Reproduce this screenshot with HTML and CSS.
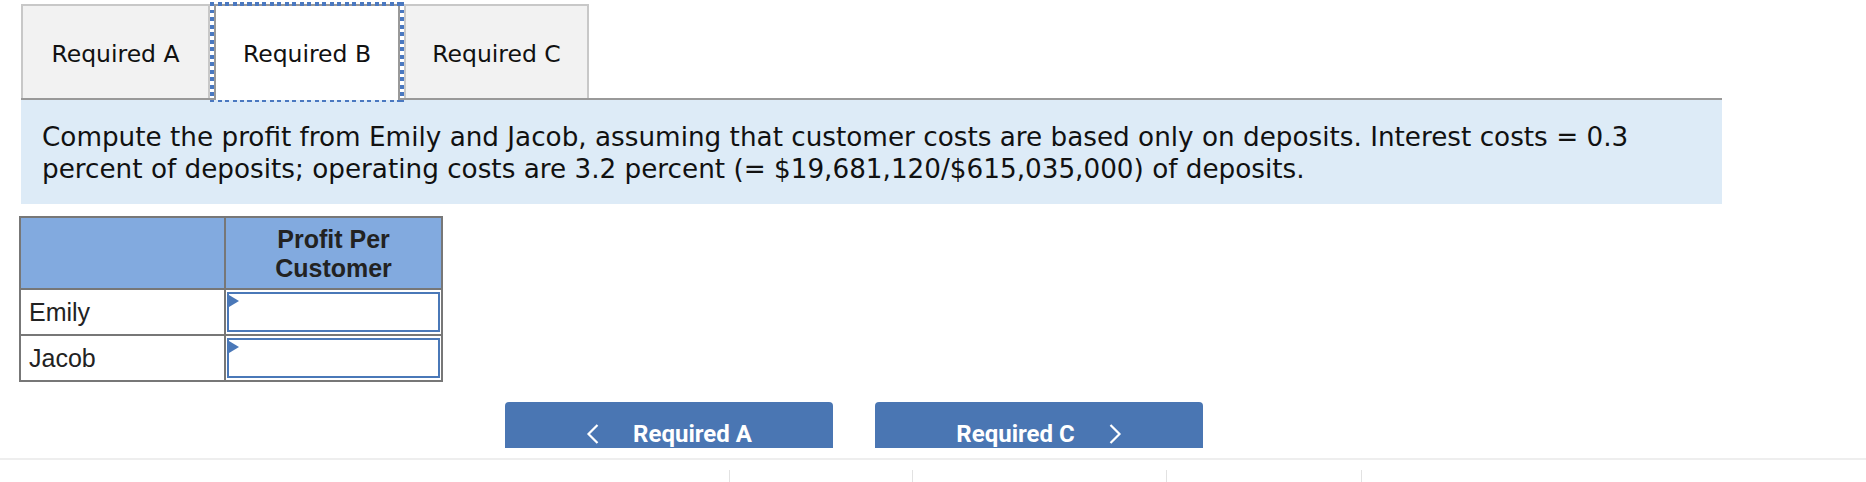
FILE: index.html
```html
<!DOCTYPE html>
<html lang="en">
<head>
    <meta charset="UTF-8">
    <meta name="viewport" content="width=device-width, initial-scale=1.0">
    <title>Required B</title>
    <link rel="stylesheet" href="styles.css">
</head>
<body>
    <div class="assignment">
        <div class="tabs">
            <button class="tab tab-a">Required A</button>
            <button class="tab tab-b active">Required B</button>
            <button class="tab tab-c">Required C</button>
        </div>

        <div class="prompt">
            Compute the profit from Emily and Jacob, assuming that customer costs are based only on deposits. Interest costs = 0.3 percent of deposits; operating costs are 3.2 percent (= $19,681,120/$615,035,000) of deposits.
        </div>

        <table class="answer">
            <tr>
                <th class="col-name"></th>
                <th class="col-value">Profit Per<br>Customer</th>
            </tr>
            <tr>
                <td class="label">Emily</td>
                <td class="entry"><span class="field"></span></td>
            </tr>
            <tr>
                <td class="label">Jacob</td>
                <td class="entry"><span class="field"></span></td>
            </tr>
        </table>

        <div class="nav">
            <button class="nav-btn">
                <svg class="chev" width="13" height="20" viewBox="0 0 13 20"><polyline points="11.5,1 2.5,10 11.5,19" fill="none" stroke="#fff" stroke-width="2.2"/></svg>
                <span>Required A</span>
            </button>
            <button class="nav-btn">
                <span>Required C</span>
                <svg class="chev" width="13" height="20" viewBox="0 0 13 20"><polyline points="1.5,1 10.5,10 1.5,19" fill="none" stroke="#fff" stroke-width="2.2"/></svg>
            </button>
        </div>
    </div>

    <div class="footer">
        <span class="cell cell-1"></span>
        <span class="cell cell-2"></span>
        <span class="cell cell-3"></span>
        <span class="cell cell-4"></span>
    </div>
</body>
</html>
```

FILE: styles.css
```css
body {
    margin: 0;
    background: #fff;
    color: #111;
    font-family: "DejaVu Sans", Verdana, sans-serif;
}

.assignment {
    margin-left: 21px;
    width: 1701px;
}

/* tabs */
.tabs {
    display: flex;
    padding-top: 4px;
    border-bottom: 2px solid #999;
}
.tab {
    height: 94px;
    padding: 4px 0 0;
    font-family: "DejaVu Sans", Verdana, sans-serif;
    font-size: 23.5px;
    color: #111;
    background: #f2f2f2;
    border: 2px solid #c8c8c8;
    border-bottom: none;
    cursor: pointer;
}
.tab-a { width: 189px; }
.tab-b { width: 186px; margin-left: 4px; }
.tab-c { width: 185px; margin-left: 4px; }
.tab.active {
    position: relative;
    height: 96px;
    padding-bottom: 2px;
    margin-bottom: -2px;
    background: #fff;
    border-color: #999;
}
.tab.active::after {
    content: "";
    position: absolute;
    top: -4px;
    bottom: -2px;
    left: -6px;
    right: -6px;
    border: 4px solid transparent;
    border-bottom-width: 2px;
    background:
        repeating-linear-gradient(90deg, #4a78c0 0 4px, transparent 4px 7.5px) top / 100% 4px no-repeat border-box,
        repeating-linear-gradient(90deg, #4a78c0 0 4px, transparent 4px 7.5px) bottom / 100% 2px no-repeat border-box,
        repeating-linear-gradient(180deg, #4a78c0 0 4px, transparent 4px 7.5px) left / 4px 100% no-repeat border-box,
        repeating-linear-gradient(180deg, #4a78c0 0 4px, transparent 4px 7.5px) right / 4px 100% no-repeat border-box;
    pointer-events: none;
}

/* question text */
.prompt {
    background: #ddebf7;
    padding: 21px 20px 19px 21px;
    font-size: 26.25px;
    line-height: 32px;
    color: #111;
}

/* answer table */
.answer {
    margin: 12px 0 0 -2px;
    border-collapse: collapse;
    border: 2px solid #777;
    font-family: "Liberation Sans", Arial, sans-serif;
    font-size: 25px;
    color: #222;
}
.answer th,
.answer td {
    border: 2px solid #777;
    padding: 0;
}
.answer th {
    height: 69px;
    padding-top: 1px;
    background: #82aadf;
    font-weight: bold;
    line-height: 29px;
    text-align: center;
}
.col-name { width: 203px; }
.col-value { width: 215px; }
.answer td {
    height: 42px;
    line-height: 29px;
}
.label {
    padding-left: 8px !important;
    text-align: left;
}
.entry {
    padding: 1px !important;
}
.field {
    position: relative;
    display: block;
    height: 36px;
    border: 2px solid #4a78b8;
    background: #fff;
}
.field::before {
    content: "";
    position: absolute;
    top: 1px;
    left: 0;
    border-left: 10px solid #4a78b8;
    border-top: 6px solid transparent;
    border-bottom: 6px solid transparent;
}

/* previous / next buttons */
.nav {
    display: flex;
    gap: 42px;
    height: 46px;
    margin: 20px 0 0 484px;
    overflow: hidden;
}
.nav-btn {
    display: flex;
    align-items: center;
    justify-content: center;
    gap: 34px;
    width: 328px;
    height: 64px;
    flex-shrink: 0;
    padding: 0;
    border: none;
    border-radius: 4px 4px 0 0;
    background: #4a76b3;
    color: #fff;
    font-family: Roboto, "Liberation Sans", sans-serif;
    font-weight: bold;
    font-size: 24px;
    line-height: 22px;
    cursor: pointer;
}
.chev {
    display: block;
}

/* page footer */
.footer {
    display: flex;
    margin-top: 10px;
    padding-top: 10px;
    border-top: 2px solid #eee;
}
.cell {
    height: 20px;
    border-left: 1px solid #e2e2e2;
}
.cell-1 { margin-left: 729px; width: 182px; }
.cell-2 { width: 253px; }
.cell-3 { width: 194px; }
.cell-4 { width: 100px; }
```
